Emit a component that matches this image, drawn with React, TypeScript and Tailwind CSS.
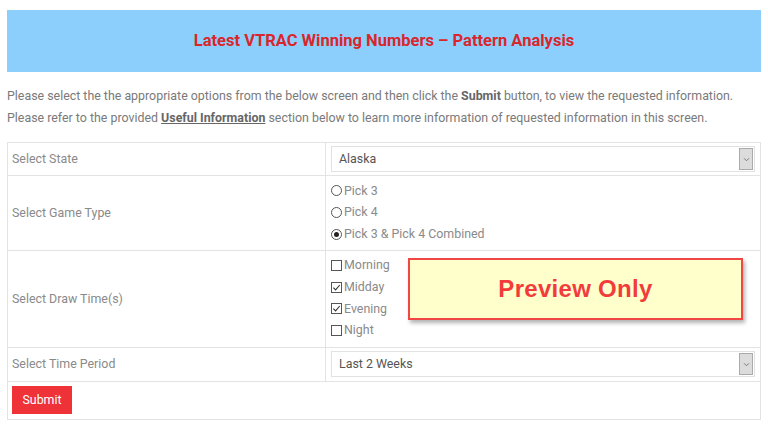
import React from 'react'

const font = { fontFamily: 'Roboto, "Liberation Sans", sans-serif' }

function Radio({ checked, label }: { checked?: boolean; label: string }) {
  return (
    <div className="flex items-center h-[21.7px]">
      <span className="w-[11px] h-[11px] rounded-full border border-[#555] flex items-center justify-center mr-[2px] bg-white">
        {checked && <span className="w-[5px] h-[5px] rounded-full bg-[#222]" />}
      </span>
      <span>{label}</span>
    </div>
  )
}

function Check({ checked, label }: { checked?: boolean; label: string }) {
  return (
    <div className="flex items-center h-[21.6px]">
      <span className="w-[11px] h-[11px] border border-[#555] flex items-center justify-center mr-[2px] bg-white">
        {checked && (
          <svg viewBox="0 0 10 10" className="w-[9px] h-[9px]">
            <path d="M1.5 5.2 L4 7.6 L8.6 2.2" fill="none" stroke="#333" strokeWidth="1.2" />
          </svg>
        )}
      </span>
      <span>{label}</span>
    </div>
  )
}

function Select({ value }: { value: string }) {
  return (
    <div className="h-[26px] border border-[#e2e2e2] bg-white flex items-center justify-between pl-[7px] pr-[1px] text-[#555]">
      <span>{value}</span>
      <span className="w-[14px] h-[22px] bg-[#dcdcdc] border border-[#aaa] flex items-center justify-center">
        <svg viewBox="0 0 8 6" className="w-[7px] h-[5px]">
          <path d="M1 1.5 L4 4.5 L7 1.5" fill="none" stroke="#666" strokeWidth="1" />
        </svg>
      </span>
    </div>
  )
}

export default function App() {
  return (
    <div className="w-[768px] h-[430px] bg-white px-[7px] pt-[10px] text-[12.4px] text-[#8a8a8a]" style={font}>
      {/* Header banner */}
      <div className="h-[62px] bg-[#8dcffc] flex items-center justify-center">
        <h1 className="text-[16.5px] font-bold text-[#d9262b]">Latest VTRAC Winning Numbers – Pattern Analysis</h1>
      </div>

      {/* Intro text */}
      <div className="mt-[13px] text-[#7a7a7a] leading-[22px] whitespace-nowrap">
        <p>
          Please select the the appropriate options from the below screen and then click the{' '}
          <b className="font-bold text-[#666]">Submit</b> button, to view the requested information.
        </p>
        <p>
          Please refer to the provided{' '}
          <b className="font-bold text-[#666] underline">Useful Information</b> section below to learn more
          information of requested information in this screen.
        </p>
      </div>

      {/* Form table */}
      <div className="mt-[13px] border border-[#e3e3e3] grid grid-cols-[318px_1fr]">
        <div className="h-[33px] flex items-center pl-[4px] border-r border-b border-[#e3e3e3]">Select State</div>
        <div className="h-[33px] px-[5px] pt-[3px] border-b border-[#e3e3e3]">
          <Select value="Alaska" />
        </div>

        <div className="h-[75px] flex items-center pl-[4px] border-r border-b border-[#e3e3e3]">Select Game Type</div>
        <div className="h-[75px] px-[5px] pt-[4px] border-b border-[#e3e3e3]">
          <Radio label="Pick 3" />
          <Radio label="Pick 4" />
          <Radio checked label="Pick 3 & Pick 4 Combined" />
        </div>

        <div className="h-[97px] flex items-center pl-[4px] border-r border-b border-[#e3e3e3]">Select Draw Time(s)</div>
        <div className="h-[97px] px-[5px] pt-[4px] border-b border-[#e3e3e3] relative">
          <Check label="Morning" />
          <Check checked label="Midday" />
          <Check checked label="Evening" />
          <Check label="Night" />
          {/* Preview overlay */}
          <div className="absolute left-[82px] top-[7px] w-[335px] h-[62px] bg-[#ffffcc] border-2 border-[#f04646] shadow-[2px_3px_4px_rgba(0,0,0,0.3)] flex items-center justify-center">
            <span className="text-[24px] font-bold text-[#f23c3c] tracking-[0.3px]" style={{ fontFamily: '"Liberation Sans", Arial, sans-serif' }}>
              Preview Only
            </span>
          </div>
        </div>

        <div className="h-[34px] flex items-center pl-[4px] border-r border-b border-[#e3e3e3]">Select Time Period</div>
        <div className="h-[34px] px-[5px] pt-[3px] border-b border-[#e3e3e3]">
          <Select value="Last 2 Weeks" />
        </div>

        <div className="col-span-2 h-[37px] pl-[4px] pt-[4px]">
          <button className="h-[28px] w-[60px] bg-[#ee3238] text-white text-[12.4px]">Submit</button>
        </div>
      </div>
    </div>
  )
}
